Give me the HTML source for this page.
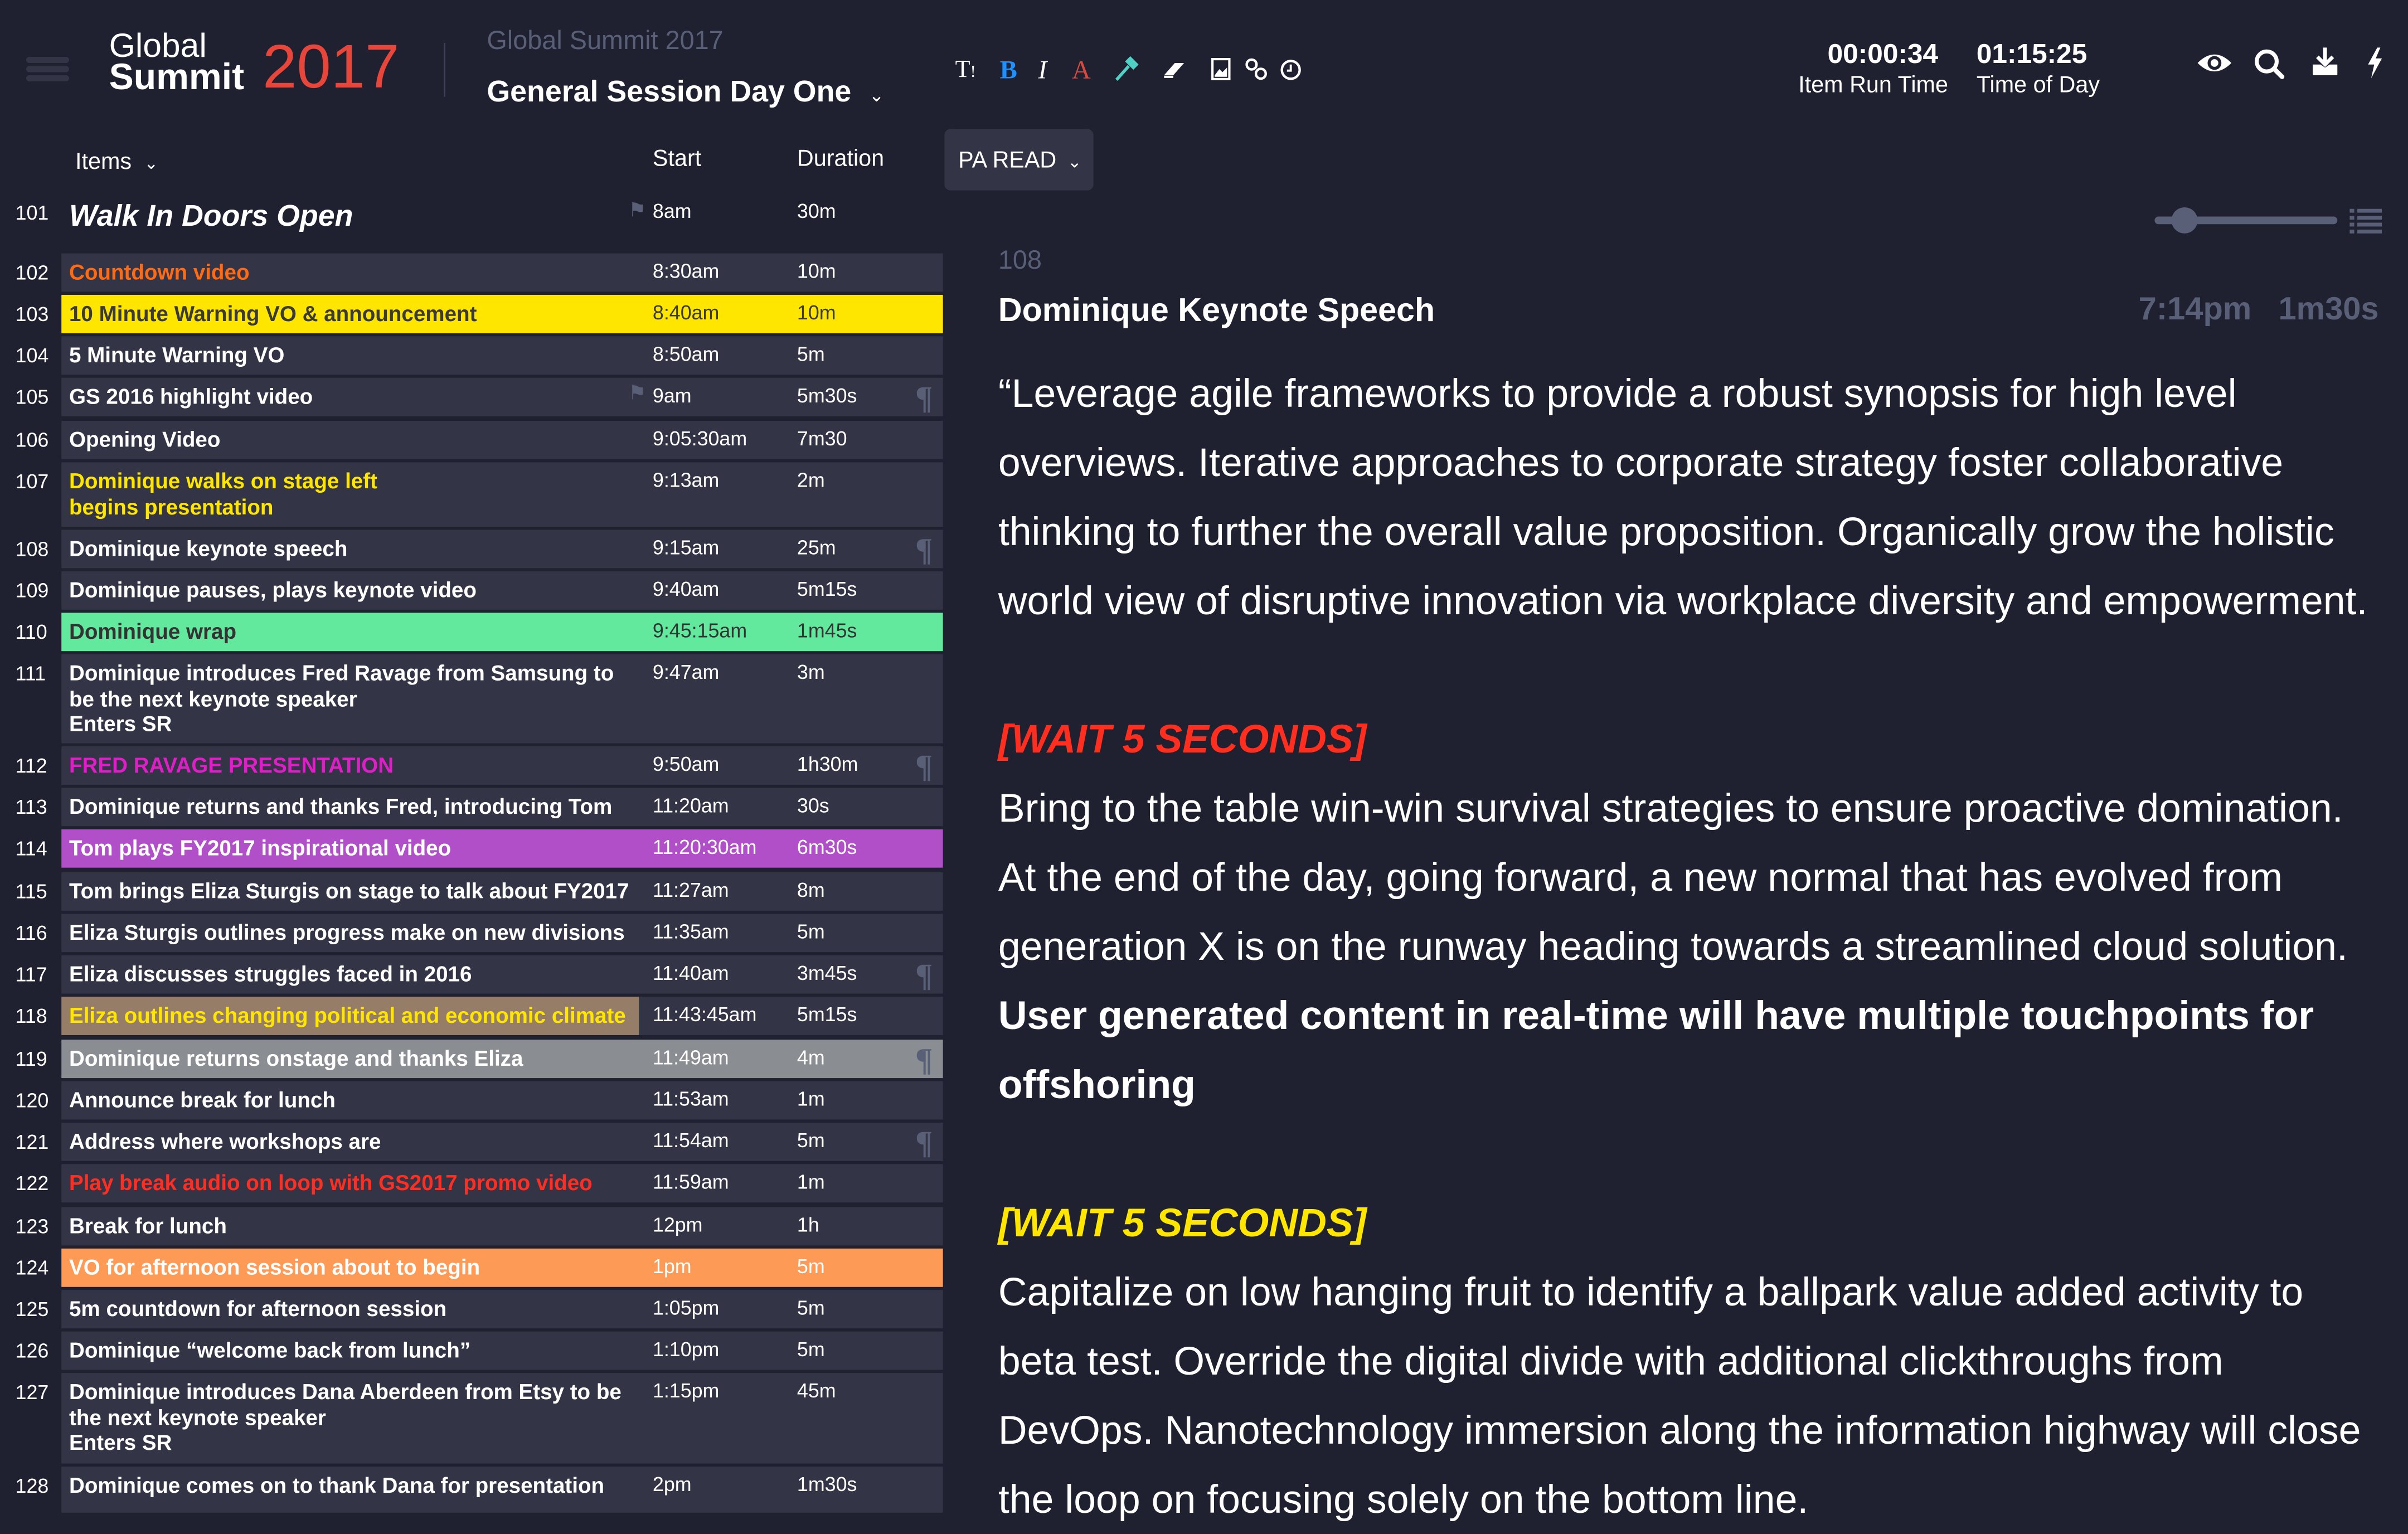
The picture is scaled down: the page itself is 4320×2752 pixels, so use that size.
<!DOCTYPE html>
<html><head><meta charset="utf-8">
<style>
*{margin:0;padding:0;box-sizing:border-box}
html,body{width:4320px;height:2700px;background:#1f2130;overflow:hidden}
#w{position:absolute;left:0;top:0;width:1568px;height:980px;transform:scale(2.755102);transform-origin:0 0;font-family:"Liberation Sans",Arial,sans-serif;color:#fff}
.a{position:absolute;white-space:nowrap}
.num{position:absolute;left:10px;font-size:13px;color:#fff}
.row{position:absolute;left:40px;width:574px;background:#333547}
.it{position:absolute;left:5px;top:4px;font-size:14px;font-weight:bold;line-height:16.5px;white-space:nowrap}
.st{position:absolute;left:385px;top:4px;font-size:13px;line-height:16.5px}
.du{position:absolute;left:479px;top:4px;font-size:13px;line-height:16.5px}
.pil{position:absolute;left:556px;top:1px;font-size:21px;color:#5a5f78;font-family:"Liberation Serif",serif;font-weight:bold}
.flag{position:absolute;left:369px;top:2px;font-size:13px;color:#5a5f78}
.p{position:absolute;left:650px;font-size:26px;line-height:45px;white-space:nowrap}
</style></head><body><div id="w">

<div class="a" style="left:17px;top:37px;width:28px;height:4px;background:#333547;border-radius:2px"></div>
<div class="a" style="left:17px;top:43px;width:28px;height:4px;background:#333547;border-radius:2px"></div>
<div class="a" style="left:17px;top:49px;width:28px;height:4px;background:#333547;border-radius:2px"></div>
<div class="a" style="left:71px;top:17px;font-size:22px;line-height:26px">Global</div>
<div class="a" style="left:71px;top:38px;font-size:24px;line-height:26px;font-weight:bold">Summit</div>
<div class="a" style="left:171px;top:21px;font-size:40px;line-height:46px;color:#e8463a">2017</div>
<div class="a" style="left:289px;top:28px;width:1px;height:35px;background:#3e4155"></div>
<div class="a" style="left:317px;top:16px;font-size:17px;line-height:22px;color:#5a5f78">Global Summit 2017</div>
<div class="a" style="left:317px;top:48px;font-size:19.5px;line-height:24px;font-weight:bold">General Session Day One <span style="font-size:12px;font-weight:normal;margin-left:6px">&#8964;</span></div>

<div class="a" style="left:622px;top:36px;font-size:16px;font-family:'Liberation Serif',serif;line-height:20px">T<span style="font-size:11px">!</span></div>
<div class="a" style="left:651px;top:36px;font-size:17px;font-family:'Liberation Serif',serif;font-weight:bold;color:#1e90ff;line-height:20px">B</div>
<div class="a" style="left:676px;top:36px;font-size:17px;font-family:'Liberation Serif',serif;font-style:italic;line-height:20px">I</div>
<div class="a" style="left:698px;top:36px;font-size:17px;font-family:'Liberation Serif',serif;color:#d94a3e;line-height:20px">A</div>
<svg class="a" style="left:724px;top:36px" width="18" height="18" viewBox="0 0 18 18"><path d="M3 16 L11 7 M10 4 L14 8 M12 2 L16 6 L14 8 L10 4 Z" stroke="#4fd1c5" stroke-width="2" fill="#4fd1c5"/></svg>
<svg class="a" style="left:756px;top:37px" width="18" height="16" viewBox="0 0 18 16"><path d="M2 12 L9 4 L15 4 L8 12 Z" fill="#fff"/><path d="M2 13 L8 13" stroke="#fff" stroke-width="1.5"/></svg>
<svg class="a" style="left:788px;top:37px" width="14" height="16" viewBox="0 0 14 16"><rect x="1.5" y="1.5" width="11" height="13" fill="none" stroke="#fff" stroke-width="1.5"/><path d="M3 12 L6 8 L8 10 L11 7 L11 13 L3 13Z" fill="#fff"/></svg>
<svg class="a" style="left:810px;top:37px" width="16" height="16" viewBox="0 0 16 16"><circle cx="5" cy="5" r="3.2" fill="none" stroke="#fff" stroke-width="1.6"/><circle cx="11" cy="11" r="3.2" fill="none" stroke="#fff" stroke-width="1.6"/></svg>
<svg class="a" style="left:833px;top:38px" width="15" height="15" viewBox="0 0 15 15"><circle cx="7.5" cy="7.5" r="5.8" fill="none" stroke="#fff" stroke-width="1.6"/><path d="M7.5 4 V8 H5" stroke="#fff" stroke-width="1.4" fill="none"/></svg>

<div class="a" style="left:1190px;top:24px;font-size:18px;font-weight:bold;line-height:22px">00:00:34</div>
<div class="a" style="left:1171px;top:47px;font-size:15px;line-height:18px">Item Run Time</div>
<div class="a" style="left:1287px;top:24px;font-size:18px;font-weight:bold;line-height:22px">01:15:25</div>
<div class="a" style="left:1287px;top:47px;font-size:15px;line-height:18px">Time of Day</div>

<svg class="a" style="left:1430px;top:32px" width="24" height="18" viewBox="0 0 24 18"><path d="M1 9 Q12 -2 23 9 Q12 20 1 9Z" fill="#fff"/><circle cx="12" cy="9" r="4.5" fill="#1f2130"/><circle cx="12" cy="9" r="2.5" fill="#fff"/></svg>
<svg class="a" style="left:1467px;top:31px" width="22" height="22" viewBox="0 0 22 22"><circle cx="9" cy="9" r="6.5" fill="none" stroke="#fff" stroke-width="2.6"/><path d="M14 14 L19 19" stroke="#fff" stroke-width="3" stroke-linecap="round"/></svg>
<svg class="a" style="left:1504px;top:30px" width="20" height="20" viewBox="0 0 20 20"><path d="M10 1 V11 M5 7 L10 12 L15 7" stroke="#fff" stroke-width="2.4" fill="none"/><path d="M2 12 H7 L10 14 L13 12 H18 V19 H2Z" fill="#fff"/></svg>
<svg class="a" style="left:1539px;top:30px" width="14" height="22" viewBox="0 0 14 22"><path d="M9 1 L3 12 L7 12 L5 21 L12 8 L8 8 L11 1Z" fill="#fff"/></svg>

<div class="a" style="left:49px;top:97px;font-size:15px;line-height:18px">Items <span style="font-size:11px;margin-left:4px">&#8964;</span></div>
<div class="a" style="left:425px;top:95px;font-size:15px;line-height:18px">Start</div>
<div class="a" style="left:519px;top:95px;font-size:15px;line-height:18px">Duration</div>
<div class="a" style="left:615px;top:84px;width:97px;height:40px;background:#333547;border-radius:4px"></div>
<div class="a" style="left:624px;top:96px;font-size:15px;line-height:18px">PA READ <span style="font-size:11px;margin-left:3px">&#8964;</span></div>

<div class="num" style="top:131px">101</div>
<div class="a" style="left:45px;top:129px;font-size:19.5px;font-weight:bold;font-style:italic;line-height:24px">Walk In Doors Open</div>
<div class="a" style="left:409px;top:129px;font-size:13px;color:#5a5f78">&#9873;</div>
<div class="a" style="left:425px;top:130px;font-size:13px">8am</div>
<div class="a" style="left:519px;top:130px;font-size:13px">30m</div>

<div class="num" style="top:170px">102</div><div class="row" style="top:165px;height:25px"><div class="it" style="color:#ff6a13">Countdown video</div><div class="st">8:30am</div><div class="du">10m</div></div>
<div class="num" style="top:197px">103</div><div class="row" style="top:192px;height:25px;background:#ffe600;color:#3a3a3a"><div class="it">10 Minute Warning VO &amp; announcement</div><div class="st">8:40am</div><div class="du">10m</div></div>
<div class="num" style="top:224px">104</div><div class="row" style="top:219px;height:25px"><div class="it">5 Minute Warning VO</div><div class="st">8:50am</div><div class="du">5m</div></div>
<div class="num" style="top:251px">105</div><div class="row" style="top:246px;height:25px"><div class="it">GS 2016 highlight video</div><div class="flag">&#9873;</div><div class="st">9am</div><div class="du">5m30s</div><div class="pil">&#182;</div></div>
<div class="num" style="top:279px">106</div><div class="row" style="top:274px;height:25px"><div class="it">Opening Video</div><div class="st">9:05:30am</div><div class="du">7m30</div></div>
<div class="num" style="top:306px">107</div><div class="row" style="top:301px;height:42px"><div class="it" style="color:#ffe600">Dominique walks on stage left<br>begins presentation</div><div class="st">9:13am</div><div class="du">2m</div></div>
<div class="num" style="top:350px">108</div><div class="row" style="top:345px;height:25px"><div class="it">Dominique keynote speech</div><div class="st">9:15am</div><div class="du">25m</div><div class="pil">&#182;</div></div>
<div class="num" style="top:377px">109</div><div class="row" style="top:372px;height:25px"><div class="it">Dominique pauses, plays keynote video</div><div class="st">9:40am</div><div class="du">5m15s</div></div>
<div class="num" style="top:404px">110</div><div class="row" style="top:399px;height:25px;background:#63e99d;color:#333"><div class="it">Dominique wrap</div><div class="st">9:45:15am</div><div class="du">1m45s</div></div>
<div class="num" style="top:431px">111</div><div class="row" style="top:426px;height:58px"><div class="it">Dominique introduces Fred Ravage from Samsung to<br>be the next keynote speaker<br>Enters SR</div><div class="st">9:47am</div><div class="du">3m</div></div>
<div class="num" style="top:491px">112</div><div class="row" style="top:486px;height:25px"><div class="it" style="color:#e01ec8">FRED RAVAGE PRESENTATION</div><div class="st">9:50am</div><div class="du">1h30m</div><div class="pil">&#182;</div></div>
<div class="num" style="top:518px">113</div><div class="row" style="top:513px;height:25px"><div class="it">Dominique returns and thanks Fred, introducing Tom</div><div class="st">11:20am</div><div class="du">30s</div></div>
<div class="num" style="top:545px">114</div><div class="row" style="top:540px;height:25px;background:#b04fc7"><div class="it">Tom plays FY2017 inspirational video</div><div class="st">11:20:30am</div><div class="du">6m30s</div></div>
<div class="num" style="top:573px">115</div><div class="row" style="top:568px;height:25px"><div class="it">Tom brings Eliza Sturgis on stage to talk about FY2017</div><div class="st">11:27am</div><div class="du">8m</div></div>
<div class="num" style="top:600px">116</div><div class="row" style="top:595px;height:25px"><div class="it">Eliza Sturgis outlines progress make on new divisions</div><div class="st">11:35am</div><div class="du">5m</div></div>
<div class="num" style="top:627px">117</div><div class="row" style="top:622px;height:25px"><div class="it">Eliza discusses struggles faced in 2016</div><div class="st">11:40am</div><div class="du">3m45s</div><div class="pil">&#182;</div></div>
<div class="num" style="top:654px">118</div><div class="row" style="top:649px;height:25px"><div style="position:absolute;left:0;top:0;width:376px;height:25px;background:#967d68"></div><div class="it" style="color:#ffe600">Eliza outlines changing political and economic climate</div><div class="st">11:43:45am</div><div class="du">5m15s</div></div>
<div class="num" style="top:682px">119</div><div class="row" style="top:677px;height:25px;background:#8a8d92"><div class="it">Dominique returns onstage and thanks Eliza</div><div class="st">11:49am</div><div class="du">4m</div><div class="pil">&#182;</div></div>
<div class="num" style="top:709px">120</div><div class="row" style="top:704px;height:25px"><div class="it">Announce break for lunch</div><div class="st">11:53am</div><div class="du">1m</div></div>
<div class="num" style="top:736px">121</div><div class="row" style="top:731px;height:25px"><div class="it">Address where workshops are</div><div class="st">11:54am</div><div class="du">5m</div><div class="pil">&#182;</div></div>
<div class="num" style="top:763px">122</div><div class="row" style="top:758px;height:25px"><div class="it" style="color:#ff2e22">Play break audio on loop with GS2017 promo video</div><div class="st">11:59am</div><div class="du">1m</div></div>
<div class="num" style="top:791px">123</div><div class="row" style="top:786px;height:25px"><div class="it">Break for lunch</div><div class="st">12pm</div><div class="du">1h</div></div>
<div class="num" style="top:818px">124</div><div class="row" style="top:813px;height:25px;background:#fd9a56"><div class="it">VO for afternoon session about to begin</div><div class="st">1pm</div><div class="du">5m</div></div>
<div class="num" style="top:845px">125</div><div class="row" style="top:840px;height:25px"><div class="it">5m countdown for afternoon session</div><div class="st">1:05pm</div><div class="du">5m</div></div>
<div class="num" style="top:872px">126</div><div class="row" style="top:867px;height:25px"><div class="it">Dominique “welcome back from lunch”</div><div class="st">1:10pm</div><div class="du">5m</div></div>
<div class="num" style="top:899px">127</div><div class="row" style="top:894px;height:59px"><div class="it">Dominique introduces Dana Aberdeen from Etsy to be<br>the next keynote speaker<br>Enters SR</div><div class="st">1:15pm</div><div class="du">45m</div></div>
<div class="num" style="top:960px">128</div><div class="row" style="top:955px;height:30px"><div class="it">Dominique comes on to thank Dana for presentation</div><div class="st">2pm</div><div class="du">1m30s</div></div>

<div class="a" style="left:1403px;top:141px;width:119px;height:5px;background:#5a5f78;border-radius:3px"></div>
<div class="a" style="left:1414px;top:135px;width:17px;height:17px;background:#5a5f78;border-radius:50%"></div>
<svg class="a" style="left:1530px;top:135px" width="21" height="18" viewBox="0 0 21 18"><g fill="#5a5f78"><rect x="0" y="1" width="3" height="2.5"/><rect x="5" y="1" width="16" height="2.5"/><rect x="0" y="5.5" width="3" height="2.5"/><rect x="5" y="5.5" width="16" height="2.5"/><rect x="0" y="10" width="3" height="2.5"/><rect x="5" y="10" width="16" height="2.5"/><rect x="0" y="14.5" width="3" height="2.5"/><rect x="5" y="14.5" width="16" height="2.5"/></g></svg>
<div class="a" style="left:650px;top:160px;font-size:17px;color:#5a5f78;line-height:20px">108</div>
<div class="a" style="left:650px;top:189px;font-size:21.5px;font-weight:bold;line-height:26px">Dominique Keynote Speech</div>
<div class="a" style="right:19px;top:189px;font-size:21px;font-weight:bold;line-height:26px;color:#5a5f78">7:14pm&nbsp;&nbsp;&nbsp;1m30s</div>

<div class="p" style="top:234px">“Leverage agile frameworks to provide a robust synopsis for high level</div>
<div class="p" style="top:279px">overviews. Iterative approaches to corporate strategy foster collaborative</div>
<div class="p" style="top:324px">thinking to further the overall value proposition. Organically grow the holistic</div>
<div class="p" style="top:369px">world view of disruptive innovation via workplace diversity and empowerment.</div>
<div class="p" style="top:459px;color:#ff2e1f;font-weight:bold;font-style:italic">[WAIT 5 SECONDS]</div>
<div class="p" style="top:504px">Bring to the table win-win survival strategies to ensure proactive domination.</div>
<div class="p" style="top:549px">At the end of the day, going forward, a new normal that has evolved from</div>
<div class="p" style="top:594px">generation X is on the runway heading towards a streamlined cloud solution.</div>
<div class="p" style="top:639px;font-weight:bold">User generated content in real-time will have multiple touchpoints for</div>
<div class="p" style="top:684px;font-weight:bold">offshoring</div>
<div class="p" style="top:774px;color:#ffe600;font-weight:bold;font-style:italic">[WAIT 5 SECONDS]</div>
<div class="p" style="top:819px">Capitalize on low hanging fruit to identify a ballpark value added activity to</div>
<div class="p" style="top:864px">beta test. Override the digital divide with additional clickthroughs from</div>
<div class="p" style="top:909px">DevOps. Nanotechnology immersion along the information highway will close</div>
<div class="p" style="top:954px">the loop on focusing solely on the bottom line.</div>

</div></body></html>
